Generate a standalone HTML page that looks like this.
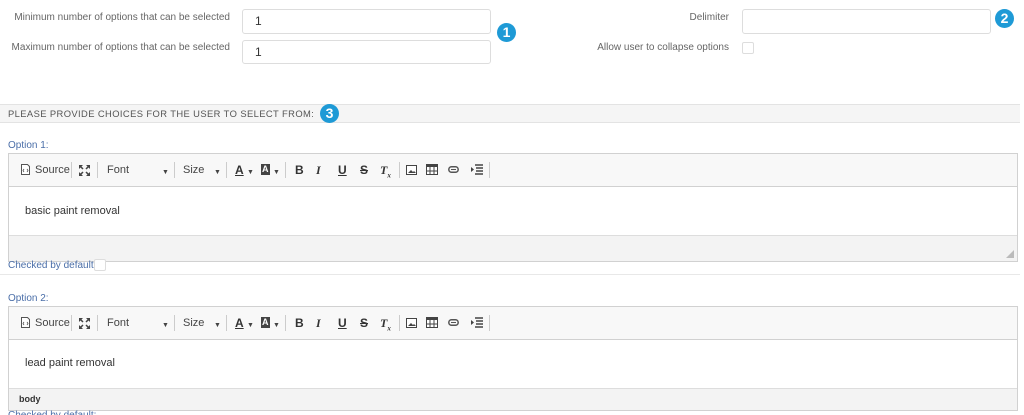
<!DOCTYPE html>
<html><head><meta charset="utf-8"><style>
*{box-sizing:border-box;margin:0;padding:0}
html,body{width:1024px;height:415px;overflow:hidden}
body{background:#fff;font-family:"Liberation Sans",Arial,sans-serif;position:relative;color:#555}
.a{position:absolute;white-space:nowrap}
.lbl{font-size:10px;color:#666;text-align:right}
.inp{border:1px solid #ddd;border-radius:3px;background:#fff;font-size:12px;color:#333;padding-left:12px;line-height:22px}
.badge{width:19px;height:19px;border-radius:50%;background:#1e9ad6;color:#fff;font-weight:bold;font-size:14px;text-align:center;line-height:19px}
.blue{color:#4a6ea8;font-size:10px}
.ed{border:1px solid #d1d1d1;background:#fff;left:8px;width:1010px}
.tb{position:absolute;left:0;top:0;right:0;height:33px;background:#f8f8f8;border-bottom:1px solid #d1d1d1}
.tb span{position:absolute;top:9px;font-size:11px;color:#444;line-height:14px}
.sep{position:absolute;top:8px;width:1px;height:16px;background:#ccc}
.bt{font-weight:bold;font-size:12px !important;color:#333 !important}
.ft{position:absolute;left:0;right:0;bottom:0;background:#f3f3f3;border-top:1px solid #ddd}
.car{font-size:7px !important;top:12px !important}
</style></head><body>

<div class="a lbl" style="left:0;width:230px;top:12px">Minimum number of options that can be selected</div>
<div class="a inp" style="left:242px;top:9px;width:249px;height:25px">1</div>
<div class="a lbl" style="left:0;width:230px;top:42px">Maximum number of options that can be selected</div>
<div class="a inp" style="left:242px;top:40px;width:249px;height:24px">1</div>
<div class="a badge" style="left:497px;top:23px">1</div>

<div class="a lbl" style="left:560px;width:169px;top:12px">Delimiter</div>
<div class="a inp" style="left:742px;top:9px;width:249px;height:25px"></div>
<div class="a badge" style="left:995px;top:9px">2</div>
<div class="a lbl" style="left:560px;width:169px;top:42px">Allow user to collapse options</div>
<div class="a" style="left:742px;top:42px;width:12px;height:12px;border:1px solid #ddd;border-radius:2px"></div>

<div class="a" style="left:0;top:104px;width:1020px;height:19px;background:#f5f5f5;border-top:1px solid #e3e3e3;border-bottom:1px solid #e3e3e3"></div>
<div class="a" style="left:8px;top:108px;font-size:9.4px;letter-spacing:0.4px;color:#555">PLEASE PROVIDE CHOICES FOR THE USER TO SELECT FROM:</div>
<div class="a badge" style="left:320px;top:104px">3</div>

<div class="a blue" style="left:8px;top:140px">Option 1:</div>
<div class="a ed" style="top:153px;height:109px">
 <div class="tb">
  <svg class="a" style="left:12px;top:10px" width="9" height="11" viewBox="0 0 9 11"><path d="M.5.5h6l2 2v8h-8z" fill="#fff" stroke="#555"/><path d="M3 5l-1 1.5 1 1.5M6 5l1 1.5-1 1.5" stroke="#555" fill="none" stroke-width=".8"/></svg>
  <span style="left:26px">Source</span><div class="sep" style="left:62px"></div>
  <svg class="a" style="left:70px;top:11px" width="11" height="11"><path d="M0 0h4L0 4zM11 0H7l4 4zM0 11h4L0 7zM11 11H7l4-4z" fill="#444"/><path d="M1 1l3 3M10 1L7 4M1 10l3-3M10 10L7 7" stroke="#444" stroke-width="1.5"/></svg>
  <div class="sep" style="left:88px"></div>
  <span style="left:98px">Font</span><span class="car" style="left:153px">▼</span><div class="sep" style="left:165px"></div>
  <span style="left:174px">Size</span><span class="car" style="left:205px">▼</span><div class="sep" style="left:217px"></div>
  <span class="bt" style="left:226px;text-decoration:underline">A</span><span class="car" style="left:238px">▼</span>
  <span style="left:252px;background:#444;color:#fff;font-weight:bold;font-size:9px;padding:0 1px;line-height:11px;top:10px">A</span><span class="car" style="left:264px">▼</span><div class="sep" style="left:276px"></div>
  <span class="bt" style="left:286px">B</span><span class="bt" style="left:307px;font-style:italic;font-family:'Liberation Serif',serif">I</span>
  <span class="bt" style="left:329px;text-decoration:underline">U</span><span class="bt" style="left:351px;text-decoration:line-through">S</span>
  <span class="bt" style="left:371px;font-style:italic;font-family:'Liberation Serif',serif">T<sub style="font-size:7px">x</sub></span><div class="sep" style="left:390px"></div>
  <svg class="a" style="left:397px;top:11px" width="11" height="10"><rect x=".5" y=".5" width="10" height="9" fill="#fff" stroke="#444"/><path d="M2 8l3-3 2 2 1-1 2 2z" fill="#444"/></svg>
  <svg class="a" style="left:417px;top:10px" width="12" height="11"><rect x=".5" y=".5" width="11" height="10" fill="#fff" stroke="#444"/><rect x="0" y="0" width="12" height="3" fill="#444"/><path d="M4 3v8M8 3v8M0 7h12" stroke="#444"/></svg>
  <svg class="a" style="left:439px;top:12px" width="11" height="7"><rect x=".8" y=".8" width="9.4" height="5.4" rx="2.7" fill="none" stroke="#555" stroke-width="1.5"/><path d="M3 3.5h5" stroke="#555"/></svg>
  <svg class="a" style="left:462px;top:10px" width="12" height="11"><path d="M0 3l3 2.5-3 2.5z" fill="#444"/><path d="M4 1h8M5 4h7M5 7h7M4 10h8" stroke="#444" stroke-width="1.5"/></svg>
  <div class="sep" style="left:480px"></div>
 </div>
 <div class="a" style="left:16px;top:51px;font-size:11px;color:#333">basic paint removal</div>
 <div class="ft" style="height:26px"><svg class="a" style="right:3px;bottom:3px" width="8" height="8"><path d="M8 0v8H0z" fill="#bbb"/></svg></div>
</div>
<div class="a blue" style="left:8px;top:260px">Checked by default:</div>
<div class="a" style="left:94px;top:259px;width:12px;height:12px;border:1px solid #ddd;border-radius:2px;background:#fff"></div>
<div class="a" style="left:0;top:274px;width:1020px;height:1px;background:#e8e8e8"></div>

<div class="a blue" style="left:8px;top:293px">Option 2:</div>
<div class="a ed" style="top:306px;height:105px">
 <div class="tb">
  <svg class="a" style="left:12px;top:10px" width="9" height="11" viewBox="0 0 9 11"><path d="M.5.5h6l2 2v8h-8z" fill="#fff" stroke="#555"/><path d="M3 5l-1 1.5 1 1.5M6 5l1 1.5-1 1.5" stroke="#555" fill="none" stroke-width=".8"/></svg>
  <span style="left:26px">Source</span><div class="sep" style="left:62px"></div>
  <svg class="a" style="left:70px;top:11px" width="11" height="11"><path d="M0 0h4L0 4zM11 0H7l4 4zM0 11h4L0 7zM11 11H7l4-4z" fill="#444"/><path d="M1 1l3 3M10 1L7 4M1 10l3-3M10 10L7 7" stroke="#444" stroke-width="1.5"/></svg>
  <div class="sep" style="left:88px"></div>
  <span style="left:98px">Font</span><span class="car" style="left:153px">▼</span><div class="sep" style="left:165px"></div>
  <span style="left:174px">Size</span><span class="car" style="left:205px">▼</span><div class="sep" style="left:217px"></div>
  <span class="bt" style="left:226px;text-decoration:underline">A</span><span class="car" style="left:238px">▼</span>
  <span style="left:252px;background:#444;color:#fff;font-weight:bold;font-size:9px;padding:0 1px;line-height:11px;top:10px">A</span><span class="car" style="left:264px">▼</span><div class="sep" style="left:276px"></div>
  <span class="bt" style="left:286px">B</span><span class="bt" style="left:307px;font-style:italic;font-family:'Liberation Serif',serif">I</span>
  <span class="bt" style="left:329px;text-decoration:underline">U</span><span class="bt" style="left:351px;text-decoration:line-through">S</span>
  <span class="bt" style="left:371px;font-style:italic;font-family:'Liberation Serif',serif">T<sub style="font-size:7px">x</sub></span><div class="sep" style="left:390px"></div>
  <svg class="a" style="left:397px;top:11px" width="11" height="10"><rect x=".5" y=".5" width="10" height="9" fill="#fff" stroke="#444"/><path d="M2 8l3-3 2 2 1-1 2 2z" fill="#444"/></svg>
  <svg class="a" style="left:417px;top:10px" width="12" height="11"><rect x=".5" y=".5" width="11" height="10" fill="#fff" stroke="#444"/><rect x="0" y="0" width="12" height="3" fill="#444"/><path d="M4 3v8M8 3v8M0 7h12" stroke="#444"/></svg>
  <svg class="a" style="left:439px;top:12px" width="11" height="7"><rect x=".8" y=".8" width="9.4" height="5.4" rx="2.7" fill="none" stroke="#555" stroke-width="1.5"/><path d="M3 3.5h5" stroke="#555"/></svg>
  <svg class="a" style="left:462px;top:10px" width="12" height="11"><path d="M0 3l3 2.5-3 2.5z" fill="#444"/><path d="M4 1h8M5 4h7M5 7h7M4 10h8" stroke="#444" stroke-width="1.5"/></svg>
  <div class="sep" style="left:480px"></div>
 </div>
 <div class="a" style="left:16px;top:50px;font-size:11px;color:#333">lead paint removal</div>
 <div class="ft" style="height:22px"><span class="a" style="left:10px;top:5px;font-size:9px;font-weight:bold;color:#333">body</span></div>
</div>
<div class="a blue" style="left:8px;top:410px">Checked by default:</div>
</body></html>
